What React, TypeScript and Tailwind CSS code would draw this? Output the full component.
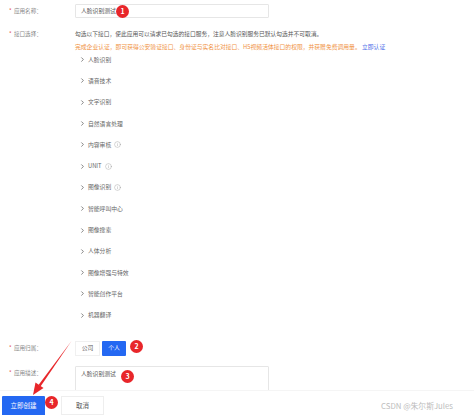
import { ChevronRight, Info } from 'lucide-react';

const font = { fontFamily: '"Noto Sans CJK SC", sans-serif' };

const services = [
  { name: '人脸识别' },
  { name: '语音技术' },
  { name: '文字识别' },
  { name: '自然语言处理' },
  { name: '内容审核', info: true },
  { name: 'UNIT', info: true },
  { name: '图像识别', info: true },
  { name: '智能呼叫中心' },
  { name: '图像搜索' },
  { name: '人体分析' },
  { name: '图像增强与特效' },
  { name: '智能创作平台' },
  { name: '机器翻译' },
];

function Label({ text }: { text: string }) {
  return (
    <div className="w-[75px] shrink-0 pl-[9px] text-[5.6px] leading-[8px] text-[#888]">
      <span className="text-[#e0433a] mr-[1px]">*</span> {text}
    </div>
  );
}

function Badge({ n, className }: { n: number; className: string }) {
  return (
    <div className={`absolute w-[13px] h-[13px] rounded-full bg-[#e8262a] text-white text-[7px] font-bold flex items-center justify-center ${className}`}>
      {n}
    </div>
  );
}

export default function App() {
  return (
    <div className="relative w-[474px] h-[415px] overflow-hidden bg-white flex flex-col text-[#555]" style={font}>
      <div className="h-[390px] shrink-0 overflow-hidden pt-[4px]">
        <div className="flex items-center">
          <Label text="应用名称：" />
          <div className="w-[194px] h-[14px] border border-[#e6e6e6] rounded-[1px] pl-[5px] text-[5.8px] leading-[12px]">人脸识别测试</div>
        </div>

        <div className="flex mt-[11.5px]">
          <Label text="接口选择：" />
          <div className="flex-1 min-w-0">
            <div className="text-[5.75px] leading-[8px] whitespace-nowrap text-[#555]">
              勾选以下接口，使此应用可以请求已勾选的接口服务，注意人脸识别服务已默认勾选并不可取消。
            </div>
            <div className="mt-[5px] text-[5.8px] leading-[8px] whitespace-nowrap text-[#f0923f]">
              完成企业认证，即可获得公安验证接口、身份证与实名比对接口、H5视频活体接口的权限，并获赠免费调用量。 <span className="text-[#4f6fe8]">立即认证</span>
            </div>
            <div className="mt-[-1.5px]">
              {services.map((s) => (
                <div key={s.name} className="h-[21.3px] flex items-center pl-[3.5px]">
                  <ChevronRight size={7} strokeWidth={2.2} className="text-[#444] mr-[2.5px]" />
                  <span className="text-[5.8px] leading-[8px] text-[#666]">{s.name}</span>
                  {s.info && <Info size={7} strokeWidth={1.2} className="text-[#888] ml-[3px]" />}
                </div>
              ))}
            </div>
          </div>
        </div>

        <div className="flex items-center mt-[15px]">
          <Label text="应用归属：" />
          <div className="flex gap-[2px]">
            <div className="w-[25px] h-[15px] border border-[#f0f0f0] text-[5.8px] flex items-center justify-center">公司</div>
            <div className="w-[24px] h-[15px] bg-[#2468f2] rounded-[1px] text-white text-[5.8px] flex items-center justify-center">个人</div>
          </div>
        </div>

        <div className="flex mt-[10px]">
          <div className="pt-[3px]"><Label text="应用描述：" /></div>
          <div className="w-[194px] h-[40px] border border-[#e6e6e6] rounded-[1px] pl-[5px] pt-[3px] text-[5.8px] leading-[8px]">人脸识别测试</div>
        </div>
      </div>

      <div className="flex-1 border-t border-[#f5f5f5] flex gap-[16px] pl-[2px] pt-[5px]">
        <div className="w-[43px] bg-[#2468f2] rounded-t-[1px] text-white text-[6.5px] flex items-center justify-center">立即创建</div>
        <div className="w-[43px] border border-[#eeeeee] text-[6.5px] flex items-center justify-center">取消</div>
      </div>

      {/* annotations on top of the screenshot */}
      <Badge n={1} className="left-[116px] top-[5px]" />
      <Badge n={2} className="left-[130px] top-[340px]" />
      <Badge n={3} className="left-[121px] top-[370px]" />
      <Badge n={4} className="left-[45px] top-[396px]" />
      <svg className="absolute left-0 top-0 pointer-events-none" width="474" height="415" fill="none">
        <path d="M71.5 341 L40.5 386.5 L38.5 385 Z" fill="#e8262a" />
        <path d="M33 395 L35.5 382.5 L43.5 388 Z" fill="#e8262a" />
      </svg>
      <div className="absolute left-[381px] top-[400px] text-[7.8px] leading-[12px] text-[#bdbdbd] whitespace-nowrap">CSDN @朱尔斯Jules</div>
    </div>
  );
}
